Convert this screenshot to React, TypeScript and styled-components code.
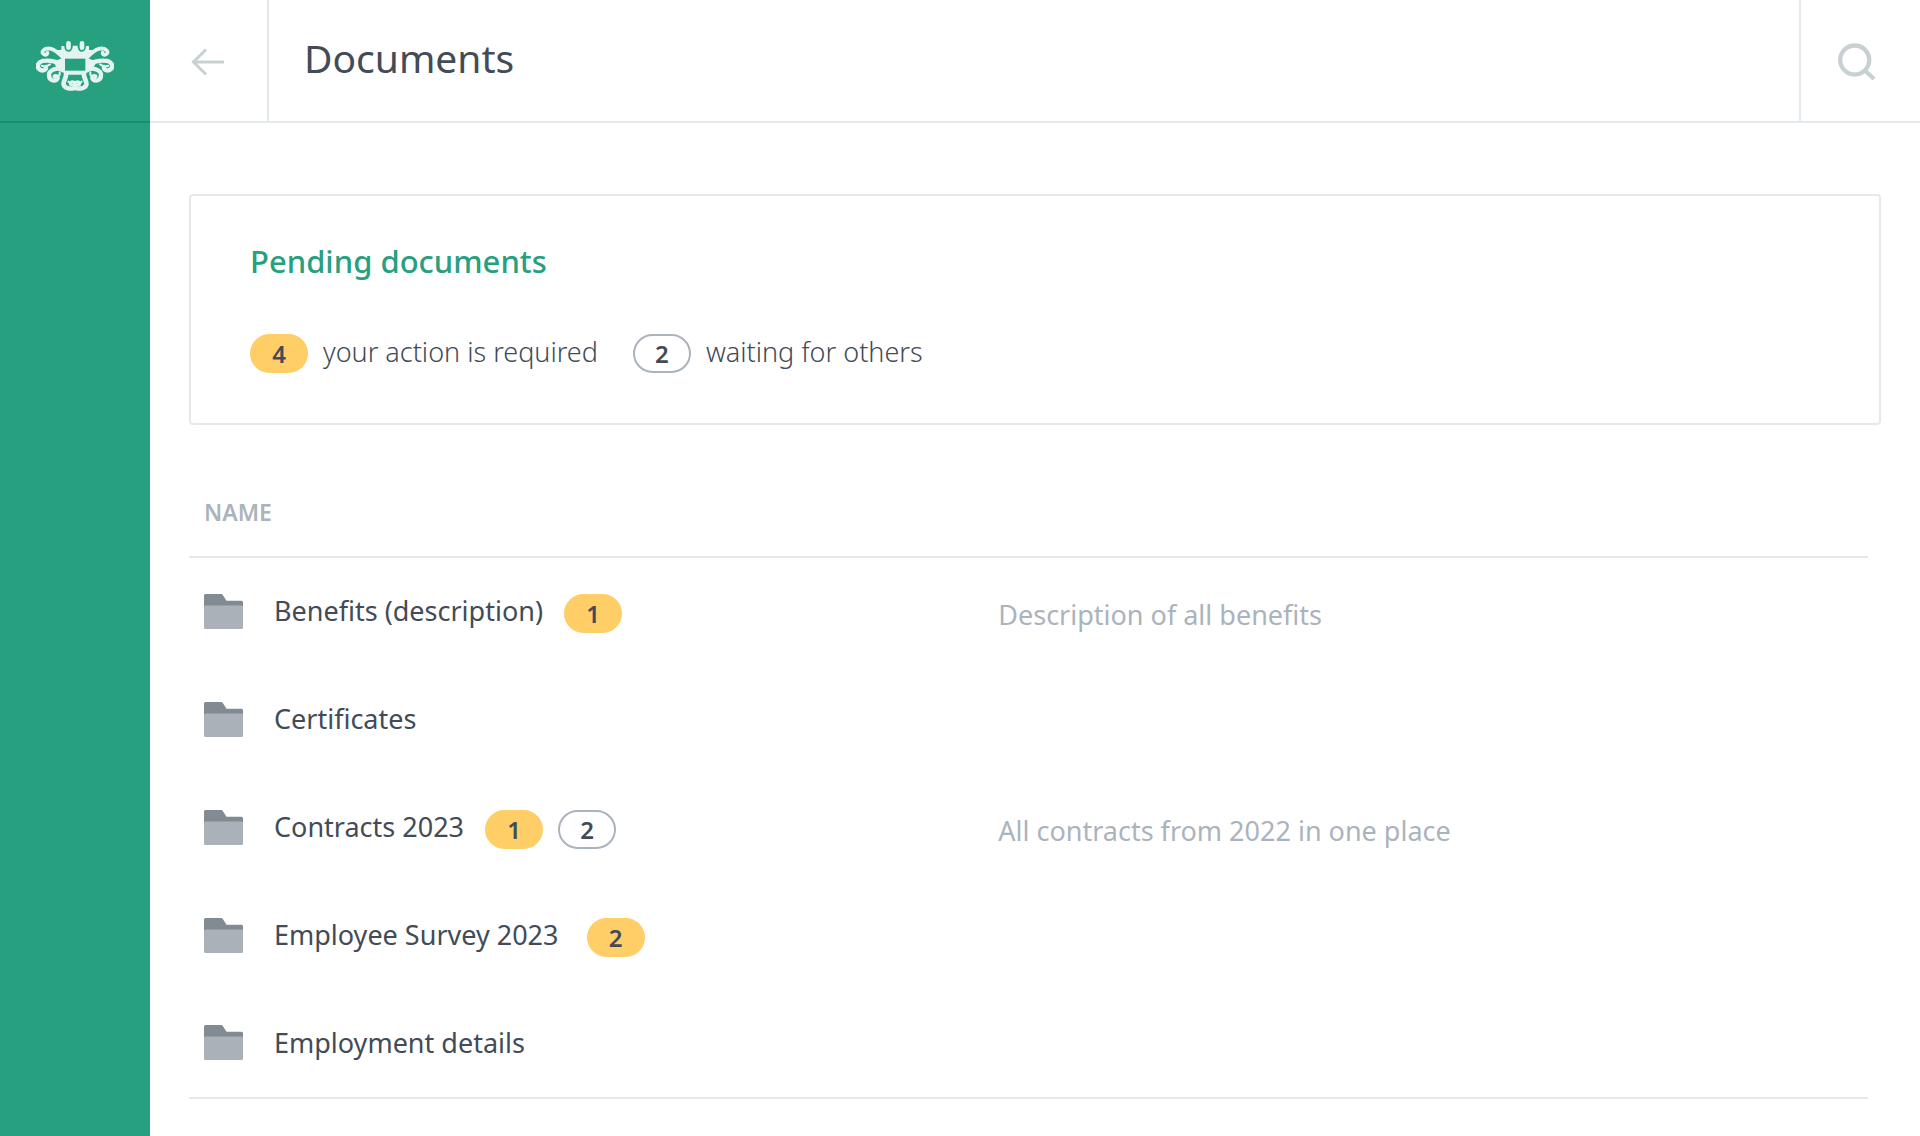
import React from "react";
import styled, { createGlobalStyle } from "styled-components";

const color = {
  brand: "#27a080",
  brandDark: "#129070",
  brandPale: "#e3f4f0",
  ink: "#424b57",
  muted: "#abb3bc",
  line: "#e4e9ee",
  icon: "#c8d1d2",
  amber: "#ffce67",
};

const GlobalStyle = createGlobalStyle`
  *, *::before, *::after { box-sizing: border-box; }
  body {
    margin: 0;
    background: #fff;
    color: ${color.ink};
    font-family: "Noto Sans", "Open Sans", sans-serif;
    font-size: 27px;
    line-height: 38px;
  }
`;

const Shell = styled.div`
  display: flex;
  min-height: 100vh;
`;

const Sidebar = styled.nav`
  flex: 0 0 150px;
  background: ${color.brand};
`;

const HomeLink = styled.a`
  display: flex;
  align-items: center;
  justify-content: center;
  height: 123px;
  padding-top: 10px;
  border-bottom: 2px solid ${color.brandDark};
`;

const Page = styled.div`
  flex: 1;
  min-width: 0;
`;

const Header = styled.header`
  display: flex;
  align-items: stretch;
  height: 123px;
  border-bottom: 2px solid ${color.line};
`;

const IconButton = styled.button<{ $side: "left" | "right" }>`
  display: flex;
  align-items: center;
  justify-content: center;
  width: ${(p) => (p.$side === "left" ? 119 : 121)}px;
  padding: ${(p) => (p.$side === "left" ? "2px 2px 0 0" : "2px 8px 0 0")};
  border: 0 solid ${color.line};
  border-${(p) => (p.$side === "left" ? "right" : "left")}-width: 2px;
  background: none;
  color: ${color.icon};
  cursor: pointer;
`;

const Title = styled.h1`
  flex: 1;
  margin: 0;
  padding: 31px 35px;
  font-size: 39px;
  font-weight: 400;
  line-height: 54px;
`;

const Main = styled.main`
  padding: 71px 39px 36px;
`;

const Card = styled.section`
  padding: 44px 59px 50px;
  border: 2px solid ${color.line};
  border-radius: 4px;
`;

const CardTitle = styled.h2`
  margin: 0 0 51px;
  color: ${color.brand};
  font-size: 31px;
  font-weight: 500;
  line-height: 42px;
`;

const Summary = styled.ul`
  display: flex;
  flex-wrap: wrap;
  gap: 12px 35px;
  margin: 0;
  padding: 0;
  list-style: none;
`;

const SummaryItem = styled.li`
  display: flex;
  align-items: center;
  gap: 15px;
  font-weight: 300;
`;

const SummaryText = styled.span`
  padding-bottom: 2px;
`;

const Badge = styled.span<{ $tone: "action" | "waiting" }>`
  display: inline-flex;
  align-items: center;
  justify-content: center;
  width: 58px;
  height: 39px;
  padding-top: 2px;
  border: 2px solid ${(p) => (p.$tone === "action" ? color.amber : color.muted)};
  border-radius: 20px;
  background: ${(p) => (p.$tone === "action" ? color.amber : "#fff")};
  font-size: 24px;
  font-weight: 600;
  line-height: 34px;
`;

const Table = styled.table`
  width: calc(100% - 13px);
  margin-top: 63px;
  border-collapse: separate;
  border-spacing: 0;
  border-bottom: 2px solid ${color.line};
  table-layout: fixed;
  text-align: left;
`;

const HeadCell = styled.th`
  height: 70px;
  padding: 7px 15px 27px;
  border-bottom: 2px solid ${color.line};
  color: ${color.muted};
  font-size: 23px;
  font-weight: 600;
  line-height: 34px;

  &:first-child { width: 48.2%; }
`;

const NameCell = styled.td`
  height: 108px;
  padding: 0 15px 2px;

  tr:last-child > & { height: 107px; }
`;

const FolderRow = styled.div`
  display: flex;
  align-items: center;
`;

const FolderLink = styled.a`
  display: flex;
  align-items: center;
  gap: 31px;
  color: inherit;
  text-decoration: none;
  white-space: pre;
`;

const Badges = styled.span`
  display: flex;
  gap: 15px;
  padding-top: 4px;
  margin-left: 21px;
`;

const DescriptionCell = styled.td`
  padding: 6px 0 0;
  color: ${color.muted};
`;

function LogoHalf() {
  return (
    <g>
      <path d="M190 114 C178 106 168 87 146 86 C132 86 124 96 129 102 C134 108 144 105 142 99" strokeWidth="11" />
      <path d="M166 92 L190 90 V160 L172 148 L160 126 L186 116 Z" fill={color.brandPale} stroke="none" />
      <path d="M186 129 C172 130 160 122 138 123 C114 123 108 140 118 149 C127 156 139 152 138 142" strokeWidth="13" />
      <path d="M125 138 L137 141 L150 134" strokeWidth="6" />
      <path d="M186 150 C172 143 146 150 147 167 C147 182 162 186 170 180 C176 175 172 168 164 170" strokeWidth="13" />
      <path d="M173 171 C179 168 180 162 179 158" strokeWidth="6" />
      <path d="M198 158 C202 172 188 184 191 195 C195 208 212 208 225 204" strokeWidth="14" />
      <path d="M225 204 C232 194 222 184 214 187 C208 190 211 196 215 195" strokeWidth="9" />
      <path d="M211 190 L205 186" strokeWidth="6" />
    </g>
  );
}

function Logo() {
  return (
    <svg width="78" height="50" viewBox="108 64 234 150" fill="none" stroke={color.brandPale} strokeLinecap="round" aria-hidden="true">
      <LogoHalf />
      <g transform="translate(450 0) scale(-1 1)">
        <LogoHalf />
      </g>
      <path
        d="M184 79 L193 79 C193 103 219 101 218 78 L233 78 C232 101 258 103 258 79 L267 79 L267 108 L262 150 Q262 162 253 165 L198 165 Q189 162 189 150 L184 108 Z"
        fill={color.brandPale}
        stroke="none"
      />
      <rect x="195" y="117" width="61" height="36" fill={color.brand} stroke="none" />
      <path d="M205.500 71 V84 M246 71 V84" strokeWidth="14" />
    </svg>
  );
}

function BackIcon() {
  return (
    <svg width="34" height="28" viewBox="0 0 34 28" fill="none" stroke="currentColor" strokeWidth="3" aria-hidden="true">
      <path d="M33 14 H3 M15 1.500 L2.500 14 L15 26.500" />
    </svg>
  );
}

function SearchIcon() {
  return (
    <svg width="38" height="38" viewBox="0 0 38 38" fill="none" stroke="currentColor" strokeWidth="4.300" aria-hidden="true">
      <circle cx="16.700" cy="17" r="14.500" />
      <path d="M27 27.500 L36 36" />
    </svg>
  );
}

function FolderIcon() {
  return (
    <svg width="39" height="35" viewBox="0 0 39 35" aria-hidden="true">
      <path d="M1.500 0 H17 Q18.200 0 18.800 1 L22.500 6.700 H37.500 Q39 6.700 39 8.200 V16 H0 V1.500 Q0 0 1.500 0 Z" fill="#838b92" />
      <rect y="11.600" width="39" height="23.400" rx="1.500" fill="#aab1b9" />
    </svg>
  );
}

type Folder = { name: string; action?: number; waiting?: number; description?: string };

const folders: Folder[] = [
  { name: "Benefits (description)", action: 1, description: "Description of all benefits" },
  { name: "Certificates" },
  { name: "Contracts 2023", action: 1, waiting: 2, description: "All contracts from 2022 in one place" },
  { name: "Employee Survey 2023 ", action: 2 },
  { name: "Employment details" },
];

export default function App() {
  return (
    <>
      <GlobalStyle />
      <Shell>
        <Sidebar>
          <HomeLink href="#" aria-label="Home">
            <Logo />
          </HomeLink>
        </Sidebar>
        <Page>
          <Header>
            <IconButton $side="left" type="button" aria-label="Back">
              <BackIcon />
            </IconButton>
            <Title>Documents</Title>
            <IconButton $side="right" type="button" aria-label="Search">
              <SearchIcon />
            </IconButton>
          </Header>
          <Main>
            <Card>
              <CardTitle>Pending documents</CardTitle>
              <Summary>
                <SummaryItem>
                  <Badge $tone="action">4</Badge>
                  <SummaryText>your action is required</SummaryText>
                </SummaryItem>
                <SummaryItem>
                  <Badge $tone="waiting">2</Badge>
                  <SummaryText>waiting for others</SummaryText>
                </SummaryItem>
              </Summary>
            </Card>
            <Table>
              <thead>
                <tr>
                  <HeadCell scope="col">NAME</HeadCell>
                  <HeadCell scope="col" aria-label="Description" />
                </tr>
              </thead>
              <tbody>
                {folders.map((folder) => (
                  <tr key={folder.name}>
                    <NameCell>
                      <FolderRow>
                        <FolderLink href="#">
                          <FolderIcon />
                          {folder.name}
                        </FolderLink>
                        <Badges>
                          {folder.action && <Badge $tone="action">{folder.action}</Badge>}
                          {folder.waiting && <Badge $tone="waiting">{folder.waiting}</Badge>}
                        </Badges>
                      </FolderRow>
                    </NameCell>
                    <DescriptionCell>{folder.description}</DescriptionCell>
                  </tr>
                ))}
              </tbody>
            </Table>
          </Main>
        </Page>
      </Shell>
    </>
  );
}
